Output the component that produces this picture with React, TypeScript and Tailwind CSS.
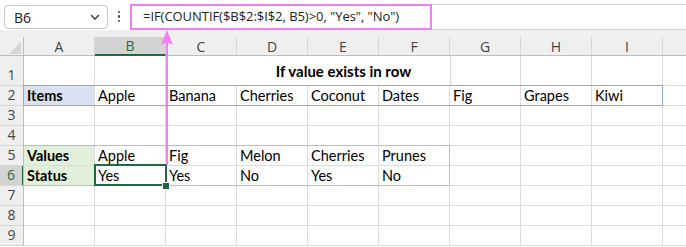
import React from "react";

const cols = ["A", "B", "C", "D", "E", "F", "G", "H", "I"];

// cell values by row number, indexed by column
const data: Record<number, string[]> = {
  2: ["Items", "Apple", "Banana", "Cherries", "Coconut", "Dates", "Fig", "Grapes", "Kiwi"],
  5: ["Values", "Apple", "Fig", "Melon", "Cherries", "Prunes"],
  6: ["Status", "Yes", "Yes", "No", "Yes", "No"],
};

const cellFont = "font-['Lato',_'Liberation_Sans',_sans-serif]";
const uiFont = "font-['Open_Sans',_'Noto_Sans',_sans-serif]";

const Cell = ({ row, col }: { row: number; col: number }) => {
  const text = data[row]?.[col] ?? "";
  const isHead = col === 0 && (row === 2 || row === 5 || row === 6);
  let bg = "bg-white";
  if (col === 0 && row === 2) bg = "bg-[#d9e1f2]";
  if (col === 0 && (row === 5 || row === 6)) bg = "bg-[#e2efda]";
  return (
    <div
      className={`${bg} border-r border-b border-[#dcdcdc] flex items-end pl-[3px] pb-[0px] text-[14.5px] leading-[18px] text-black ${cellFont} ${
        isHead ? "font-bold" : ""
      } overflow-visible whitespace-nowrap`}
    >
      {text}
    </div>
  );
};

export default function App() {
  const rows = [1, 2, 3, 4, 5, 6, 7, 8, 9];
  return (
    <div className="w-[686px] h-[247px] bg-white overflow-hidden relative">
      {/* Formula bar */}
      <div className="h-[30px] flex items-start bg-white">
        <div className="ml-[4px] mt-[5px] w-[104px] h-[24px] border border-[#c6c6c6] rounded-[4px] flex items-center justify-between pl-[9px] pr-[6px]">
          <span className={`text-[14px] text-[#222] ${uiFont}`}>B6</span>
          <svg width="12" height="12" viewBox="0 0 12 12" fill="none">
            <path d="M2.5 4.5 L6 8 L9.5 4.5" stroke="#333" strokeWidth="1.4" strokeLinecap="round" strokeLinejoin="round" />
          </svg>
        </div>
        <div className="w-[22px] h-[29px] flex flex-col items-center justify-center gap-[2px] pt-[4px]">
          <span className="w-[2.5px] h-[2.5px] rounded-full bg-[#444]" />
          <span className="w-[2.5px] h-[2.5px] rounded-full bg-[#444]" />
          <span className="w-[2.5px] h-[2.5px] rounded-full bg-[#444]" />
        </div>
        <div className="mt-[4px] flex-1 h-[26px] border-y border-l border-[#d0d0d0] relative">
          <div className="absolute -left-px -top-px w-[302px] h-[26px] border-2 border-[#f47ff4] flex items-center pl-[11px]">
            <span className={`text-[13px] tracking-[-0.05px] text-[#222] whitespace-nowrap ${uiFont}`}>
              =IF(COUNTIF($B$2:$I$2, B5)&gt;0, "Yes", "No")
            </span>
          </div>
        </div>
      </div>

      {/* Sheet */}
      <div className="h-[7px] bg-[#efefef]" />
      <div className="relative grid grid-cols-[24px_repeat(9,71px)_1fr] grid-rows-[19px_30px_repeat(8,20px)]">
        {/* column headers */}
        <div className="bg-[#efefef] border-r border-b border-[#bdbdbd] relative">
          <svg className="absolute left-[9px] top-[5px]" width="12" height="12" viewBox="0 0 12 12">
            <polygon points="12,0 12,12 0,12" fill="#d6d6d6" />
          </svg>
        </div>
        {cols.map((c) => (
          <div
            key={c}
            className={`flex items-center justify-center text-[14px] ${uiFont} border-r border-[#d6d6d6] ${
              c === "B"
                ? "bg-[#d3d3d3] text-[#1e6b41] border-b-2 border-b-[#1e6b41]"
                : "bg-[#efefef] text-[#444] border-b border-b-[#bdbdbd]"
            }`}
          >
            {c}
          </div>
        ))}
        <div className="bg-[#efefef] border-b border-[#bdbdbd]" />

        {rows.map((r) => (
          <React.Fragment key={r}>
            <div
              className={`flex items-end justify-center pb-[1px] text-[14px] leading-[18px] ${uiFont} border-b border-[#d6d6d6] ${
                r === 6
                  ? "bg-[#d3d3d3] text-[#1e6b41] border-r-2 border-r-[#1e6b41]"
                  : "bg-[#efefef] text-[#444] border-r border-r-[#bdbdbd]"
              }`}
            >
              {r}
            </div>
            {r === 1 ? (
              <>
                <div className="bg-white border-r border-b border-[#dcdcdc]" />
                <div className="bg-white border-r border-b border-[#dcdcdc]" />
                <div className="bg-white border-b border-[#dcdcdc]" />
                <div
                  className={`col-span-3 bg-white border-b border-[#dcdcdc] flex items-end justify-center pb-[3px] text-[15px] font-bold text-black ${cellFont}`}
                >
                  If value exists in row
                </div>
                <div className="bg-white border-l border-r border-b border-[#dcdcdc]" />
                <div className="bg-white border-r border-b border-[#dcdcdc]" />
                <div className="bg-white border-r border-b border-[#dcdcdc]" />
                <div className="bg-white border-b border-[#dcdcdc]" />
              </>
            ) : (
              <>
                {cols.map((_, i) => (
                  <Cell key={i} row={r} col={i} />
                ))}
                <div className="bg-white border-b border-[#dcdcdc]" />
              </>
            )}
          </React.Fragment>
        ))}

        {/* range outlines */}
        <div className="absolute left-[23px] top-[48px] w-[640px] h-[21px] border border-[#8ea9db] pointer-events-none" />
        <div className="absolute left-[23px] top-[108px] w-[427px] h-[41px] border border-[#a9d08e] pointer-events-none" />
        {/* selected cell B6 */}
        <div className="absolute left-[94px] top-[127px] w-[73px] h-[22px] border-2 border-[#1e6b41] pointer-events-none" />
        <div className="absolute left-[163px] top-[146px] w-[6px] h-[6px] bg-[#1e6b41] border border-white box-content -translate-x-px -translate-y-px" />
      </div>

      {/* pink pointer from formula to B6 */}
      <svg className="absolute left-[158px] top-[29px] pointer-events-none" width="18" height="140" viewBox="0 0 18 140">
        <line x1="9" y1="10" x2="9" y2="136" stroke="#f47ff4" strokeWidth="2" />
        <polygon points="9,1 3,16 9,13 15,16" fill="#f47ff4" />
      </svg>
    </div>
  );
}
